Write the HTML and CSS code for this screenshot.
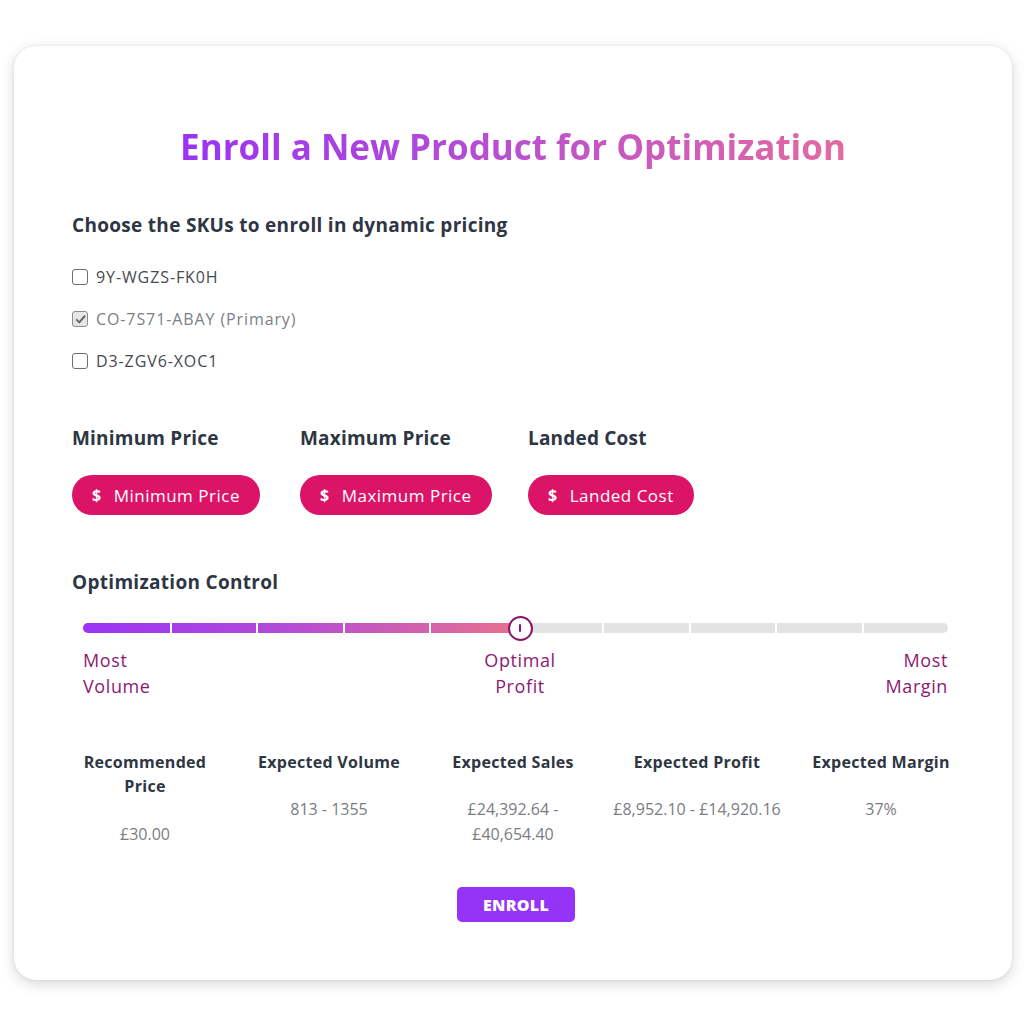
FILE: index.html
```html
<!DOCTYPE html>
<html>
<head>
<meta charset="utf-8">
<link rel="stylesheet" href="styles.css">
</head>
<body>
<div class="card">
  <h1 class="title">Enroll a New Product for Optimization</h1>

  <h2 class="section">Choose the SKUs to enroll in dynamic pricing</h2>
  <div class="skus">
    <label class="sku"><span class="box"></span>9Y-WGZS-FK0H</label>
    <label class="sku primary"><span class="box checked"><svg viewBox="0 0 16 16" width="16" height="16"><path d="M3.5 8.5 L6.5 11.5 L13 4" fill="none" stroke="#666" stroke-width="2.4" stroke-linecap="round" stroke-linejoin="round"/></svg></span>CO-7S71-ABAY (Primary)</label>
    <label class="sku"><span class="box"></span>D3-ZGV6-XOC1</label>
  </div>

  <div class="prices">
    <div class="price">
      <div class="plabel">Minimum Price</div>
      <div class="pill"><span class="dollar">$</span>Minimum Price</div>
    </div>
    <div class="price">
      <div class="plabel">Maximum Price</div>
      <div class="pill"><span class="dollar">$</span>Maximum Price</div>
    </div>
    <div class="price">
      <div class="plabel">Landed Cost</div>
      <div class="pill"><span class="dollar">$</span>Landed Cost</div>
    </div>
  </div>

  <h2 class="section opt">Optimization Control</h2>
  <div class="slider">
    <div class="track">
      <div class="fill"></div>
      <div class="ticks">
        <span></span><span></span><span></span><span></span><span></span><span></span><span></span><span></span><span></span><span></span>
      </div>
      <div class="thumb"><span></span></div>
    </div>
    <div class="slabels">
      <div class="sl left">Most<br>Volume</div>
      <div class="sl mid">Optimal<br>Profit</div>
      <div class="sl right">Most<br>Margin</div>
    </div>
  </div>

  <div class="stats">
    <div class="stat"><div class="sh">Recommended Price</div><div class="sv">£30.00</div></div>
    <div class="stat"><div class="sh">Expected Volume</div><div class="sv">813 - 1355</div></div>
    <div class="stat"><div class="sh">Expected Sales</div><div class="sv">£24,392.64 -<br>£40,654.40</div></div>
    <div class="stat"><div class="sh">Expected Profit</div><div class="sv">£8,952.10 - £14,920.16</div></div>
    <div class="stat"><div class="sh">Expected Margin</div><div class="sv">37%</div></div>
  </div>

  <div class="actions"><button class="enroll">ENROLL</button></div>
</div>
</body>
</html>
```

FILE: styles.css
```css
* { box-sizing: border-box; }
html, body { margin: 0; padding: 0; background: #fff; }
body {
  font-family: "Open Sans", "Noto Sans", "Liberation Sans", sans-serif;
  width: 1024px;
  height: 1024px;
  padding: 46px 12px 0 14px;
}
.card {
  width: 998px;
  height: 934px;
  background: #fff;
  border-radius: 22px;
  box-shadow: 0 4px 14px rgba(0,0,0,0.16), 0 0 3px rgba(0,0,0,0.08);
  padding: 0 58px;
  position: relative;
}
.title {
  margin: 0;
  padding-top: 78px;
  text-align: center;
  font-size: 35px;
  font-weight: 700;
  line-height: 46px;
  letter-spacing: 0;
  background: linear-gradient(90deg, #9a33f5 0%, #b24ad8 40%, #e46aa0 100%);
  -webkit-background-clip: text;
  background-clip: text;
  color: transparent;
  width: max-content;
  margin-left: auto;
  margin-right: auto;
}
.section {
  margin: 0;
  font-size: 19px;
  font-weight: 700;
  color: #2e3644;
  line-height: 24px;
  letter-spacing: 0.3px;
}
.title + .section { margin-top: 43px; }
.skus {
  margin-top: 28px;
  display: flex;
  flex-direction: column;
  gap: 18px;
}
.sku {
  display: flex;
  align-items: center;
  font-size: 16px;
  color: #444a52;
  line-height: 24px;
  letter-spacing: 0.9px;
}
.sku.primary { color: #7b7f85; }
.box {
  width: 16px;
  height: 16px;
  border: 1.5px solid #6b6e73;
  border-radius: 3px;
  margin-right: 8px;
  display: inline-flex;
  align-items: center;
  justify-content: center;
  background: #fff;
}
.box.checked { background: #e6e6e6; border-color: #8a8d91; }
.box svg { display: block; width: 13px; height: 13px; }

.prices {
  margin-top: 53px;
  display: flex;
  gap: 40px;
}
.price { display: flex; flex-direction: column; align-items: flex-start; }
.price:nth-child(1) { width: 188px; }
.price:nth-child(2) { width: 188px; }
.plabel {
  font-size: 19px;
  font-weight: 700;
  color: #2e3644;
  line-height: 24px;
  letter-spacing: 0.2px;
}
.pill {
  margin-top: 25px;
  height: 40px;
  border-radius: 20px;
  background: #db1467;
  color: #fff;
  font-size: 17px;
  display: flex;
  align-items: center;
  padding: 0 20px 0 20px;
  white-space: nowrap;
  letter-spacing: 0.5px;
}
.dollar { font-weight: 700; margin-right: 12px; font-size: 16px; }

.section.opt { margin-top: 55px; }

.slider { margin-top: 29px; padding: 0 6px 0 11px; }
.track {
  position: relative;
  height: 10px;
  background: #e3e3e3;
  border-radius: 5px;
}
.fill {
  position: absolute;
  left: 0; top: 0; bottom: 0;
  width: 437px;
  border-radius: 5px 0 0 5px;
  background: linear-gradient(90deg, #9a33f5 0%, #b24ad8 45%, #e8718f 100%);
}
.ticks {
  position: absolute;
  inset: 0;
  display: grid;
  grid-template-columns: repeat(10, 1fr);
}
.ticks span { border-left: 2px solid #fff; }
.ticks span:first-child { border-left: 0; }
.thumb {
  position: absolute;
  left: 437px;
  top: 50%;
  width: 25px;
  height: 25px;
  margin: -12.5px 0 0 -12.5px;
  border-radius: 50%;
  border: 2.5px solid #8d1466;
  background: #fff;
  display: flex;
  align-items: center;
  justify-content: center;
}
.thumb span { width: 2px; height: 8px; background: #8d1466; border-radius: 1px; }

.slabels {
  margin-top: 14px;
  position: relative;
  height: 54px;
  font-size: 18px;
  line-height: 26px;
  color: #8d1a72;
  letter-spacing: 0.6px;
}
.sl { position: absolute; top: 0; }
.sl.left { left: 0; }
.sl.mid { left: 437px; transform: translateX(-50%); text-align: center; }
.sl.right { right: 0; text-align: right; }

.stats {
  margin: 49px -39px 0 -39px;
  display: grid;
  grid-template-columns: repeat(5, 184px);
  justify-content: center;
}
.stat { text-align: center; }
.sh {
  font-size: 16px;
  font-weight: 700;
  color: #2e3644;
  line-height: 24px;
  padding: 0 18px;
  letter-spacing: 0.3px;
}
.stat:nth-child(1) .sh { padding: 0 30px; }
.stat:nth-child(5) .sh { padding: 0; margin: 0 -6px; }
.sv {
  margin-top: 23px;
  font-size: 16px;
  color: #7a7d82;
  line-height: 25px;
}
.stat:nth-child(1) .sv { margin-top: 24px; }
.actions { display: flex; justify-content: center; margin-top: 40px; padding-left: 6px; }
.enroll {
  width: 118px;
  height: 35px;
  border: 0;
  border-radius: 5px;
  background: #9533f7;
  color: #fff;
  font-family: inherit;
  font-size: 16px;
  font-weight: 800;
  letter-spacing: 0.3px;
  padding: 0;
}
```
